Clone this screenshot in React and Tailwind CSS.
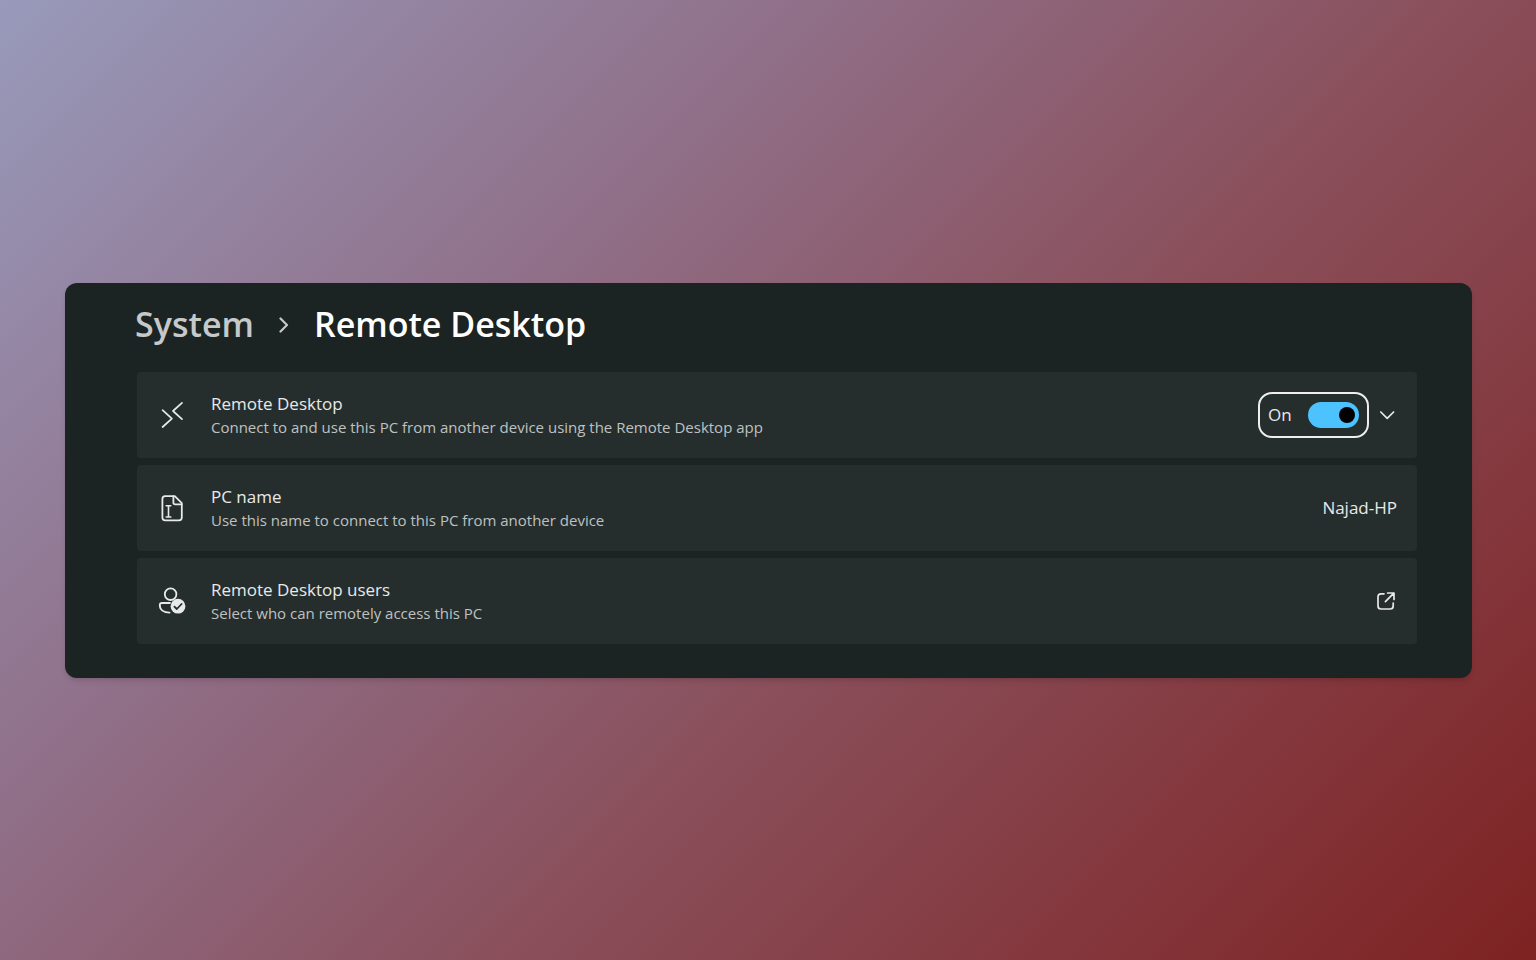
import { useState } from 'react'

const rows = [
  {
    id: 'remote',
    title: 'Remote Desktop',
    desc: 'Connect to and use this PC from another device using the Remote Desktop app',
    icon: RemoteIcon,
  },
  {
    id: 'name',
    title: 'PC name',
    desc: 'Use this name to connect to this PC from another device',
    icon: RenameIcon,
  },
  {
    id: 'users',
    title: 'Remote Desktop users',
    desc: 'Select who can remotely access this PC',
    icon: UserIcon,
  },
]

function RemoteIcon() {
  return (
    <svg viewBox="0 0 28 28" className="size-7" fill="none" stroke="currentColor" strokeWidth="1.7" strokeLinecap="round" strokeLinejoin="round" aria-hidden="true">
      <path d="M4.6 9.2l9.3 8.4-9.3 8.4" />
      <path d="M24 1.8l-9 8.2 9 8.2" />
    </svg>
  )
}

function RenameIcon() {
  return (
    <svg viewBox="0 0 28 28" className="size-7" fill="none" stroke="currentColor" strokeWidth="1.8" strokeLinecap="round" strokeLinejoin="round" aria-hidden="true">
      <path d="M7.2 2.2h9.6l7 7V23.600a2.800 2.800 0 0 1-2.800 2.800H7.200a2.800 2.800 0 0 1-2.800-2.800V5a2.800 2.800 0 0 1 2.800-2.800z" />
      <path d="M15.400 2.400v6.200a1.800 1.800 0 0 0 1.800 1.800h6.400" />
      <path d="M8.200 11.800h4.600M8.200 23h4.600M10.500 11.800V23" strokeWidth="1.600" />
    </svg>
  )
}

function UserIcon() {
  return (
    <svg viewBox="0 0 28 28" className="size-7" fill="none" stroke="currentColor" strokeWidth="1.800" strokeLinecap="round" strokeLinejoin="round" aria-hidden="true">
      <circle cx="12.600" cy="7.200" r="5.800" />
      <path d="M12 16H4a2.200 2.200 0 0 0-2.200 2.200c0 4.400 3.800 7.400 9.800 7.400" />
      <circle cx="20" cy="19.200" r="7.400" fill="currentColor" stroke="none" />
      <path d="M16.400 19.600l2.400 2.400 4.800-5" className="stroke-[#262e2d]" />
    </svg>
  )
}

function RowControl({ id }) {
  const [on, setOn] = useState(true)

  if (id === 'remote') {
    return (
      <div className="flex items-center">
        <label className="flex h-[46px] w-[111px] cursor-pointer items-center justify-between rounded-[14px] border-2 border-[#eeeeee] pr-2 pl-2">
          <span className="text-[17px]">{on ? 'On' : 'Off'}</span>
          <input
            type="checkbox"
            role="switch"
            aria-label="Remote Desktop"
            checked={on}
            onChange={() => setOn(!on)}
            className="flex h-[26px] w-[51px] appearance-none items-center rounded-full bg-gray-500 px-1 outline-none before:size-4 before:rounded-full before:bg-black checked:justify-end checked:bg-[#4cc2ff]"
          />
        </label>
        <button type="button" aria-label="Show more settings" className="ml-2 flex w-5 justify-center">
          <svg viewBox="0 0 16 16" className="size-4" fill="none" stroke="currentColor" strokeWidth="1.700" strokeLinecap="round" strokeLinejoin="round" aria-hidden="true">
            <path d="M1.800 5l6.400 6.400L14.600 5" />
          </svg>
        </button>
      </div>
    )
  }

  if (id === 'name') {
    return <span className="text-[17px]">Najad-HP</span>
  }

  return (
    <button type="button" aria-label="Open Remote Desktop users" className="mr-px">
      <svg viewBox="0 0 20 20" className="size-5" fill="none" stroke="currentColor" strokeWidth="1.700" strokeLinecap="round" strokeLinejoin="round" aria-hidden="true">
        <path d="M8 2.800H5a3 3 0 0 0-3 3V15a3 3 0 0 0 3 3h9.200a3 3 0 0 0 3-3v-3" />
        <path d="M11.600 2H18v6.400M17.800 2.200L9.400 10.600" />
      </svg>
    </button>
  )
}

export default function App() {
  return (
    <main className="flex min-h-screen items-center bg-[linear-gradient(135deg,#989abb_0%,#906f88_33%,#8a505c_58%,#7e2222_100%)] pr-16 pl-[65px] font-['Open_Sans','Noto_Sans',sans-serif] text-[#e8e9e9]">
      <section className="w-full rounded-xl bg-[#1c2423] pt-5 pr-[55px] pb-[34px] pl-[72px] shadow-md">
        <nav aria-label="Breadcrumb" className="mb-[25px] flex h-11 items-center text-[34px] font-semibold">
          <a href="#system" className="-ml-[2px] text-[#c6c9c9]">System</a>
          <svg viewBox="0 0 16 16" className="mx-[22px] size-4" fill="none" stroke="#c6c9c9" strokeWidth="2.200" strokeLinecap="round" strokeLinejoin="round" aria-hidden="true">
            <path d="M4.500 1.500L11 8l-6.500 6.500" />
          </svg>
          <h1 className="text-white">Remote Desktop</h1>
        </nav>

        <div className="flex flex-col gap-[7px]">
          {rows.map(({ id, title, desc, icon: Icon }) => (
            <div key={id} className="flex h-[86px] items-center rounded-sm bg-[#262e2d] pr-5 pl-[21px]">
              <Icon />
              <div className="ml-[25px] flex-1">
                <h2 className="text-[17px] leading-6">{title}</h2>
                <p className="text-[15px] leading-[22px] text-[#bec1c1]">{desc}</p>
              </div>
              <RowControl id={id} />
            </div>
          ))}
        </div>
      </section>
    </main>
  )
}
